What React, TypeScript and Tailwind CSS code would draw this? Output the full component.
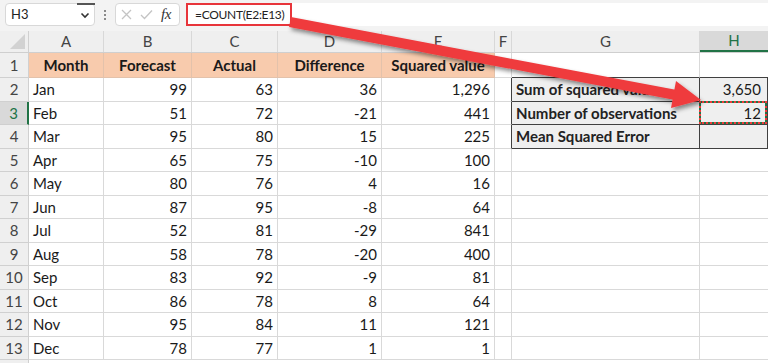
import React from "react";

const FONT = { fontFamily: "Lato, 'Open Sans', sans-serif" };

type Row = [string, string, string, string, string];
const data: Row[] = [
  ["Jan", "99", "63", "36", "1,296"],
  ["Feb", "51", "72", "-21", "441"],
  ["Mar", "95", "80", "15", "225"],
  ["Apr", "65", "75", "-10", "100"],
  ["May", "80", "76", "4", "16"],
  ["Jun", "87", "95", "-8", "64"],
  ["Jul", "52", "81", "-29", "841"],
  ["Aug", "58", "78", "-20", "400"],
  ["Sep", "83", "92", "-9", "81"],
  ["Oct", "86", "78", "8", "64"],
  ["Nov", "95", "84", "11", "121"],
  ["Dec", "78", "77", "1", "1"],
];

const side: Record<number, [string, string]> = {
  2: ["Sum of squared value", "3,650"],
  3: ["Number of observations", "12"],
  4: ["Mean Squared Error", ""],
};

function RowNum({ n, active }: { n: number; active?: boolean }) {
  return active ? (
    <div className="w-[29px] shrink-0 flex items-center justify-center bg-[#d9d9d9] border-r-2 border-r-[#217346] border-b border-b-[#cfcfcf] text-[15px] text-[#217346]">
      {n}
    </div>
  ) : (
    <div className="w-[29px] shrink-0 flex items-center justify-center bg-[#efefef] border-r border-b border-[#d0d0d0] text-[15px] text-[#444]">
      {n}
    </div>
  );
}

export default function App() {
  return (
    <div className="relative w-[768px] h-[363px] overflow-hidden bg-white text-[#1a1a1a]" style={FONT}>
      {/* Formula bar */}
      <div className="h-[31px] bg-[#f3f3f3] flex items-start pt-[3px]">
        <div className="relative ml-[5px] w-[90px] h-[23px] bg-white border border-[#d8d8d8] rounded-[4px] flex items-center pl-[5px] pr-[4px] text-[13px] text-[#222]">
          <span className="flex-1">H3</span>
          <svg width="10" height="8" viewBox="0 0 10 8">
            <path d="M1.5 2.5 L5 6 L8.5 2.5" stroke="#333" strokeWidth="1.6" fill="none" />
          </svg>
          <div className="absolute right-[-1px] top-[-1px] w-[18px] h-[2px] bg-[#555]" />
        </div>
        <div className="w-[20px] h-[23px] flex flex-col items-center justify-center gap-[2px]">
          <div className="w-[2px] h-[2px] bg-[#8a8a8a]" />
          <div className="w-[2px] h-[2px] bg-[#8a8a8a]" />
          <div className="w-[2px] h-[2px] bg-[#8a8a8a]" />
        </div>
        <div className="w-[65px] h-[23px] bg-white border border-[#d8d8d8] rounded-[4px] flex items-center pl-[5px] gap-[8px]">
          <svg width="11" height="11" viewBox="0 0 11 11">
            <path d="M1 1 L10 10 M10 1 L1 10" stroke="#c4c4c4" strokeWidth="1.3" />
          </svg>
          <svg width="13" height="11" viewBox="0 0 13 11">
            <path d="M1 6 L4.5 9.5 L12 1.5" stroke="#c4c4c4" strokeWidth="1.3" fill="none" />
          </svg>
          <span className="text-[15px] italic text-[#333] tracking-[-0.5px]" style={{ fontFamily: "'Liberation Serif', serif" }}>
            fx
          </span>
        </div>
        <div className="ml-[6px] flex-1 h-[23px] bg-white">
          <div className="w-[106px] h-[23px] border-2 border-[#e8353b] flex items-center pl-[7px] text-[12px] tracking-[-0.3px] text-[#222] whitespace-nowrap">
            =COUNT(E2:E13)
          </div>
        </div>
      </div>

      {/* Column headers */}
      <div className="flex h-[22px] bg-[#efefef] border-b border-[#cfcfcf] text-[15px] text-[#444]">
        <div className="w-[29px] shrink-0 border-r border-[#d0d0d0] relative">
          <svg className="absolute right-[3px] bottom-[3px]" width="15" height="15" viewBox="0 0 15 15">
            <polygon points="15,0 15,15 0,15" fill="#d2d2d2" />
          </svg>
        </div>
        <div className="w-[75px] shrink-0 border-r border-[#d8d8d8] flex items-center justify-center">A</div>
        <div className="w-[88px] shrink-0 border-r border-[#d8d8d8] flex items-center justify-center">B</div>
        <div className="w-[86px] shrink-0 border-r border-[#d8d8d8] flex items-center justify-center">C</div>
        <div className="w-[104px] shrink-0 border-r border-[#d8d8d8] flex items-center justify-center">D</div>
        <div className="w-[113px] shrink-0 border-r border-[#d8d8d8] flex items-center justify-center">E</div>
        <div className="w-[17px] shrink-0 border-r border-[#d8d8d8] flex items-center justify-center">F</div>
        <div className="w-[188px] shrink-0 border-r border-[#d8d8d8] flex items-center justify-center">G</div>
        <div className="flex-1 bg-[#d9d9d9] border-b-2 border-[#217346] flex items-center justify-center text-[#217346]">H</div>
      </div>

      {/* Row 1 */}
      <div className="flex h-[25px] text-[15px]">
        <RowNum n={1} />
        <div className="w-[75px] shrink-0 bg-[#f8cbad] border-r border-b border-[#e3c2ab] flex items-center justify-center font-bold">Month</div>
        <div className="w-[88px] shrink-0 bg-[#f8cbad] border-r border-b border-[#e3c2ab] flex items-center justify-center font-bold">Forecast</div>
        <div className="w-[86px] shrink-0 bg-[#f8cbad] border-r border-b border-[#e3c2ab] flex items-center justify-center font-bold">Actual</div>
        <div className="w-[104px] shrink-0 bg-[#f8cbad] border-r border-b border-[#e3c2ab] flex items-center justify-center font-bold">Difference</div>
        <div className="w-[113px] shrink-0 bg-[#f8cbad] border-r border-b border-[#e3c2ab] flex items-center justify-center font-bold">Squared value</div>
        <div className="w-[17px] shrink-0 border-r border-b border-[#d9d9d9]" />
        <div className="w-[188px] shrink-0 border-r border-[#d9d9d9] border-b border-b-[#404040]" />
        <div className="flex-1 border-b border-[#404040]" />
      </div>

      {/* Data rows */}
      {data.map((r, i) => {
        const n = i + 2;
        const s = side[n];
        return (
          <div key={n} className="flex h-[23.5px] text-[15px]">
            <RowNum n={n} active={n === 3} />
            <div className="w-[75px] shrink-0 border-r border-b border-[#d9d9d9] flex items-center pl-[4px]">{r[0]}</div>
            <div className="w-[88px] shrink-0 border-r border-b border-[#d9d9d9] flex items-center justify-end pr-[4px]">{r[1]}</div>
            <div className="w-[86px] shrink-0 border-r border-b border-[#d9d9d9] flex items-center justify-end pr-[4px]">{r[2]}</div>
            <div className="w-[104px] shrink-0 border-r border-b border-[#d9d9d9] flex items-center justify-end pr-[4px]">{r[3]}</div>
            <div className="w-[113px] shrink-0 border-r border-b border-[#d9d9d9] flex items-center justify-end pr-[4px]">{r[4]}</div>
            {s ? (
              <>
                <div className="w-[17px] shrink-0 border-b border-[#d9d9d9] border-r border-r-[#404040]" />
                <div className="w-[188px] shrink-0 bg-[#efefef] border-r border-b border-[#404040] flex items-center pl-[4px] font-bold text-[#222]">
                  {s[0]}
                </div>
                <div className="relative flex-1 bg-[#efefef] border-r border-b border-[#404040] flex items-center justify-end pr-[6px]">
                  {s[1]}
                  {n === 3 && (
                    <>
                      <div className="absolute -left-px -top-px right-0 bottom-0 border-2 border-[#217346]" />
                      <div className="absolute -left-px -top-px right-0 bottom-0 border-2 border-dotted border-[#f03a3a]" />
                    </>
                  )}
                </div>
              </>
            ) : (
              <>
                <div className="w-[17px] shrink-0 border-r border-b border-[#d9d9d9]" />
                <div className="w-[188px] shrink-0 border-r border-b border-[#d9d9d9]" />
                <div className="flex-1 border-b border-[#d9d9d9]" />
              </>
            )}
          </div>
        );
      })}
      <div className="flex h-[10px]">
        <div className="w-[29px] shrink-0 bg-[#efefef] border-r border-[#d0d0d0]" />
      </div>

      {/* Arrow overlay */}
      <svg className="absolute left-0 top-0 pointer-events-none" width="768" height="363" viewBox="0 0 768 363">
        <defs>
          <filter id="sh" x="-10%" y="-50%" width="120%" height="200%">
            <feDropShadow dx="2" dy="3" stdDeviation="2" floodColor="#000" floodOpacity="0.45" />
          </filter>
        </defs>
        <g filter="url(#sh)">
          <line x1="290" y1="22" x2="676" y2="95" stroke="#ef3b3e" strokeWidth="10" />
          <polygon points="701,100 676,81 671,108" fill="#ef3b3e" />
        </g>
      </svg>
    </div>
  );
}
